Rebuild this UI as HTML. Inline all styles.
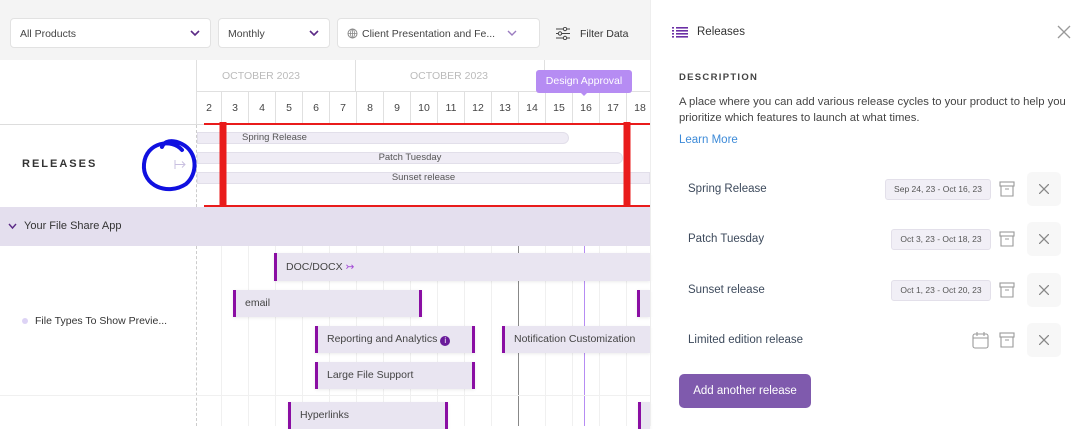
<!DOCTYPE html>
<html><head><style>
*{box-sizing:border-box;margin:0;padding:0}
body{width:1080px;height:426px;overflow:hidden;background:#fff;font-family:"Liberation Sans",sans-serif;position:relative;color:#333}
.a{position:absolute}
.dd{position:absolute;top:18px;height:30px;background:#fff;border:1px solid #e2e2e2;border-radius:4px;font-size:10.5px;color:#444;padding:9px 0 0 9px}
.chev{position:absolute;right:10px;top:10px}
.day{position:absolute;top:92px;height:32px;font-size:10.5px;color:#444;text-align:center;line-height:32px;border-left:1px solid #e0e0e0;width:27px}
.vl{position:absolute;top:246px;height:180px;width:1px;background:#f0f0f0}
.bar{position:absolute;background:#e9e5f1;border-left:3px solid #8a0ea3;font-size:10.5px;color:#444;padding-left:9px;box-shadow:0 1px 3px rgba(0,0,0,.08)}
.rb{position:absolute;left:197px;height:12px;background:#efecf5;border:1px solid #e2dfea;border-radius:0 6px 6px 0;font-size:9.5px;color:#555;line-height:10px}
.rel{position:absolute;left:688px;font-size:11.5px;color:#3d4a5c}
.date{position:absolute;height:21px;background:#f1eff6;border:1px solid #e3e0ea;border-radius:3px;font-size:8.5px;color:#555;line-height:19px;text-align:center;right:89px}
.xb{position:absolute;left:1027px;width:34px;height:34px;background:#f7f7f7;border-radius:5px}
</style></head><body>
<div class="a" style="left:0;top:0;width:650px;height:60px;background:#f4f4f4"></div>
<div class="dd" style="left:10px;width:201px">All Products<svg class="chev" width="10" height="8"><path d="M1 2l4 4 4-4" stroke="#5b2a86" stroke-width="1.6" fill="none"/></svg></div>
<div class="dd" style="left:218px;width:112px">Monthly<svg class="chev" width="10" height="8"><path d="M1 2l4 4 4-4" stroke="#5b2a86" stroke-width="1.6" fill="none"/></svg></div>
<div class="dd" style="left:337px;width:203px;padding-left:24px">Client Presentation and Fe...<svg class="a" style="left:9px;top:9px" width="11" height="11"><circle cx="5.5" cy="5.5" r="4.5" fill="none" stroke="#888"/><path d="M1 5.5h9M5.5 1v9" stroke="#888" stroke-width=".8"/><ellipse cx="5.5" cy="5.5" rx="2" ry="4.5" fill="none" stroke="#888" stroke-width=".8"/></svg><svg class="chev" style="right:22px" width="10" height="8"><path d="M1 2l4 4 4-4" stroke="#9a7cc0" stroke-width="1.4" fill="none"/></svg></div>
<svg class="a" style="left:556px;top:27px" width="14" height="13"><path d="M0 2h14M0 6.5h14M0 11h14" stroke="#444" stroke-width="1.1"/><circle cx="9" cy="2" r="1.7" fill="#f4f4f4" stroke="#444"/><circle cx="4" cy="6.5" r="1.7" fill="#f4f4f4" stroke="#444"/><circle cx="9" cy="11" r="1.7" fill="#f4f4f4" stroke="#444"/></svg>
<div class="a" style="left:580px;top:28px;font-size:10.5px;color:#333">Filter Data</div>
<div class="a" style="left:196px;top:60px;width:454px;height:32px;border-bottom:1px solid #e0e0e0;border-left:1px solid #e0e0e0"></div>
<div class="a" style="left:355px;top:60px;width:1px;height:32px;background:#e0e0e0"></div>
<div class="a" style="left:544px;top:60px;width:1px;height:32px;background:#e0e0e0"></div>
<div class="a" style="left:222px;top:70px;font-size:10.5px;color:#bbb">OCTOBER 2023</div>
<div class="a" style="left:410px;top:70px;font-size:10.5px;color:#bbb">OCTOBER 2023</div>
<div class="a" style="left:600px;top:70px;font-size:10.5px;color:#bbb">BER</div>
<div class="day" style="left:196px;width:25px">2</div>
<div class="day" style="left:221px">3</div><div class="day" style="left:248px">4</div><div class="day" style="left:275px">5</div><div class="day" style="left:302px">6</div><div class="day" style="left:329px">7</div><div class="day" style="left:356px">8</div><div class="day" style="left:383px">9</div><div class="day" style="left:410px">10</div><div class="day" style="left:437px">11</div><div class="day" style="left:464px">12</div><div class="day" style="left:491px">13</div><div class="day" style="left:518px">14</div><div class="day" style="left:545px">15</div><div class="day" style="left:572px">16</div><div class="day" style="left:599px">17</div><div class="day" style="left:626px">18</div>
<div class="a" style="left:536px;top:70px;width:96px;height:23px;background:#b68cf3;border-radius:3px;color:#fff;font-size:10.5px;text-align:center;line-height:23px">Design Approval</div>
<div class="a" style="left:580px;top:92px;border:4px solid transparent;border-top-color:#b68cf3"></div>
<div class="a" style="left:0;top:124px;width:650px;height:1px;background:#ddd"></div>
<div class="a" style="left:196px;top:125px;width:1px;height:82px;border-left:1px dashed #ccc"></div>
<div class="a" style="left:22px;top:158px;font-size:11px;letter-spacing:2px;color:#333;font-weight:bold">RELEASES</div>
<svg class="a" style="left:174px;top:159px" width="13" height="11"><path d="M1 1v9M1 5.5h10M8 2.5l3 3-3 3" stroke="#c9c0e0" stroke-width="1" fill="none"/></svg>
<div class="rb" style="top:132px;width:372px;padding-left:44px">Spring Release</div>
<div class="rb" style="top:152px;width:426px;text-align:center">Patch Tuesday</div>
<div class="rb" style="top:172px;width:453px;text-align:center;border-radius:0">Sunset release</div>
<svg class="a" style="left:0;top:0" width="650" height="220"><path d="M204 124H650M204 206H650" stroke="#e91b1b" stroke-width="2"/><path d="M223 122V212M627 122V212" stroke="#e91b1b" stroke-width="7"/><path d="M182 150C172 138 146 142 144 164C142 186 168 196 186 184C198 174 198 152 182 144C172 139 164 141 162 147" stroke="#1010e0" stroke-width="4" fill="none" stroke-linecap="round"/></svg>
<div class="a" style="left:0;top:207px;width:650px;height:39px;background:#e4dfee"></div>
<svg class="a" style="left:8px;top:223px" width="9" height="7"><path d="M1 1l3.5 4L8 1" stroke="#5b2a86" stroke-width="1.4" fill="none"/></svg>
<div class="a" style="left:24px;top:220px;font-size:11px;color:#333">Your File Share App</div>
<div class="a" style="left:196px;top:246px;width:1px;height:180px;border-left:1px dashed #ccc"></div>
<div class="vl" style="left:221px"></div><div class="vl" style="left:248px"></div><div class="vl" style="left:275px"></div><div class="vl" style="left:302px"></div><div class="vl" style="left:329px"></div><div class="vl" style="left:356px"></div><div class="vl" style="left:383px"></div><div class="vl" style="left:410px"></div><div class="vl" style="left:437px"></div><div class="vl" style="left:464px"></div><div class="vl" style="left:491px"></div><div class="vl" style="left:518px;background:#888"></div><div class="vl" style="left:545px"></div><div class="vl" style="left:572px"></div><div class="vl" style="left:584px;background:#b68cf3"></div><div class="vl" style="left:599px"></div><div class="vl" style="left:626px"></div>
<div class="a" style="left:0;top:395px;width:650px;height:1px;background:#f0f0f0"></div>
<div class="a" style="left:22px;top:318px;width:6px;height:6px;border-radius:50%;background:#ddd3f5"></div>
<div class="a" style="left:35px;top:315px;font-size:10.5px;color:#333">File Types To Show Previe...</div>
<div class="bar" style="left:274px;top:253px;width:376px;height:28px;line-height:28px">DOC/DOCX <span style="color:#a44bd6">↣</span></div>
<div class="bar" style="left:233px;top:290px;width:189px;height:27px;line-height:27px;border-right:3px solid #8a0ea3">email</div>
<div class="bar" style="left:637px;top:290px;width:13px;height:27px"></div>
<div class="bar" style="left:315px;top:326px;width:160px;height:27px;line-height:27px;border-right:3px solid #8a0ea3">Reporting and Analytics <span style="display:inline-block;width:10px;height:10px;border-radius:50%;background:#6a1b9a;color:#fff;font-size:8px;line-height:10px;text-align:center;vertical-align:-1px">i</span></div>
<div class="bar" style="left:502px;top:326px;width:148px;height:27px;line-height:27px">Notification Customization</div>
<div class="bar" style="left:315px;top:362px;width:160px;height:27px;line-height:27px;border-right:3px solid #8a0ea3">Large File Support</div>
<div class="bar" style="left:288px;top:402px;width:160px;height:27px;line-height:27px;border-right:3px solid #8a0ea3">Hyperlinks</div>
<div class="bar" style="left:638px;top:402px;width:12px;height:27px"></div>
<div class="a" style="left:650px;top:0;width:1px;height:426px;background:#eee"></div>
<svg class="a" style="left:672px;top:27px" width="16" height="11"><g fill="#6b2fa5"><rect x="0" y="0" width="2" height="1.6"/><rect x="0" y="3" width="2" height="1.6"/><rect x="0" y="6" width="2" height="1.6"/><rect x="0" y="9" width="2" height="1.6"/><rect x="4" y="0" width="12" height="1.6"/><rect x="4" y="3" width="12" height="1.6"/><rect x="4" y="6" width="12" height="1.6"/><rect x="4" y="9" width="12" height="1.6"/></g></svg>
<div class="a" style="left:697px;top:26px;font-size:11.5px;color:#333">Releases</div>
<svg class="a" style="left:1057px;top:25px" width="14" height="14"><path d="M1 1l12 12M13 1L1 13" stroke="#999" stroke-width="1.3"/></svg>
<div class="a" style="left:679px;top:72px;font-size:9.5px;letter-spacing:1.3px;font-weight:bold;color:#444">DESCRIPTION</div>
<div class="a" style="left:679px;top:94px;width:395px;font-size:11.3px;line-height:16px;color:#444">A place where you can add various release cycles to your product to help you prioritize which features to launch at what times.</div>
<div class="a" style="left:679px;top:134px;font-size:11.5px;color:#3c8ad8">Learn More</div>
<div class="rel" style="top:183px">Spring Release</div>
<div class="date" style="top:179px;width:106px">Sep 24, 23 - Oct 16, 23</div>
<div class="rel" style="top:233px">Patch Tuesday</div>
<div class="date" style="top:229px;width:100px">Oct 3, 23 - Oct 18, 23</div>
<div class="rel" style="top:284px">Sunset release</div>
<div class="date" style="top:280px;width:100px">Oct 1, 23 - Oct 20, 23</div>
<div class="rel" style="top:334px">Limited edition release</div>
<svg class="a" style="left:972px;top:331px" width="17" height="18"><rect x="1" y="3" width="15" height="14" rx="2" fill="none" stroke="#999" stroke-width="1.1"/><path d="M1 7h15M5 1v4M12 1v4" stroke="#999" stroke-width="1.1"/></svg>
<svg class="a" style="left:999px;top:181px" width="16" height="16"><rect x="1" y="1" width="14" height="4" fill="none" stroke="#999" stroke-width="1.1"/><path d="M2 5v10h12V5M6 8h4" fill="none" stroke="#999" stroke-width="1.1"/></svg>
<svg class="a" style="left:999px;top:231px" width="16" height="16"><rect x="1" y="1" width="14" height="4" fill="none" stroke="#999" stroke-width="1.1"/><path d="M2 5v10h12V5M6 8h4" fill="none" stroke="#999" stroke-width="1.1"/></svg>
<svg class="a" style="left:999px;top:282px" width="16" height="16"><rect x="1" y="1" width="14" height="4" fill="none" stroke="#999" stroke-width="1.1"/><path d="M2 5v10h12V5M6 8h4" fill="none" stroke="#999" stroke-width="1.1"/></svg>
<svg class="a" style="left:999px;top:332px" width="16" height="16"><rect x="1" y="1" width="14" height="4" fill="none" stroke="#999" stroke-width="1.1"/><path d="M2 5v10h12V5M6 8h4" fill="none" stroke="#999" stroke-width="1.1"/></svg>
<div class="xb" style="top:172px"><svg class="a" style="left:12px;top:12px" width="10" height="10"><path d="M0 0l10 10M10 0L0 10" stroke="#888" stroke-width="1.3"/></svg></div>
<div class="xb" style="top:222px"><svg class="a" style="left:12px;top:12px" width="10" height="10"><path d="M0 0l10 10M10 0L0 10" stroke="#888" stroke-width="1.3"/></svg></div>
<div class="xb" style="top:273px"><svg class="a" style="left:12px;top:12px" width="10" height="10"><path d="M0 0l10 10M10 0L0 10" stroke="#888" stroke-width="1.3"/></svg></div>
<div class="xb" style="top:323px"><svg class="a" style="left:12px;top:12px" width="10" height="10"><path d="M0 0l10 10M10 0L0 10" stroke="#888" stroke-width="1.3"/></svg></div>
<div class="a" style="left:679px;top:374px;width:132px;height:34px;background:#7f5aad;border-radius:5px;color:#fff;font-size:11.5px;text-align:center;line-height:34px">Add another release</div>
</body></html>
